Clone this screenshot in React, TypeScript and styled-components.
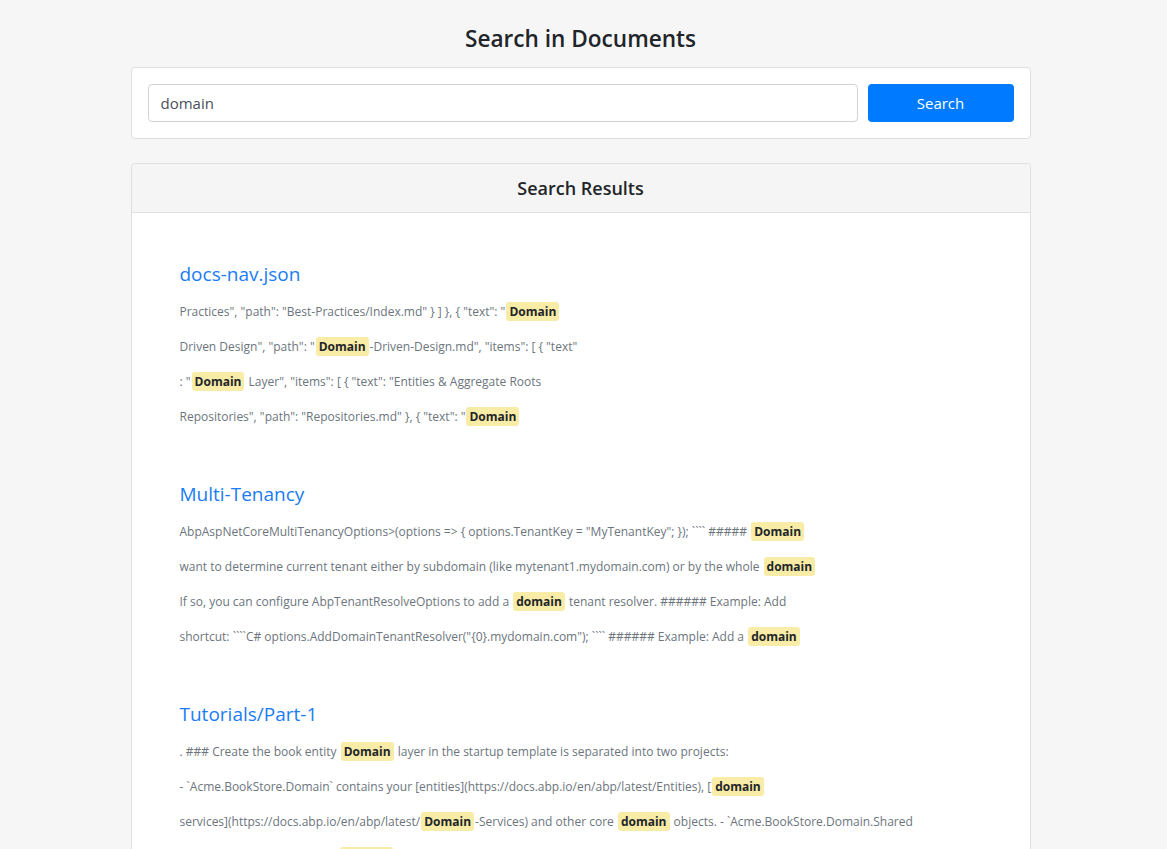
import React from "react";
import styled, { createGlobalStyle } from "styled-components";

const GlobalStyle = createGlobalStyle`
    html, body {
        margin: 0;
        padding: 0;
        background: #f6f6f6;
        font-family: "Open Sans", "Noto Sans", Arial, sans-serif;
        color: #212529;
    }
    * {
        box-sizing: border-box;
    }
`

const Page = styled.div`
    width: 900px;
    margin: 0 auto;
    padding-top: 24px;
    position: relative;
    left: -3px;
`

const Heading = styled.h3`
    margin: 0 0 13px;
    text-align: center;
    font-size: 22.6px;
    font-weight: 600;
    line-height: 30px;
    color: #212529;
`

const Card = styled.div`
    background: #fff;
    border: 1px solid #dfdfdf;
    border-radius: 4px;
`

const SearchCard = styled(Card)`
    display: flex;
    gap: 10px;
    padding: 16px;
    margin-bottom: 24px;
`

const Input = styled.input`
    flex: 1;
    height: 38px;
    padding: 6px 12px;
    font-family: inherit;
    font-size: 15px;
    color: #495057;
    border: 1px solid #ced4da;
    border-radius: 4px;
    outline: none;
`

const Button = styled.button`
    width: 146px;
    height: 38px;
    border: none;
    border-radius: 4px;
    background: #007bff;
    color: #fff;
    font-family: inherit;
    font-size: 15px;
`

const CardHeader = styled.div`
    background: #f5f5f5;
    border-bottom: 1px solid #dfdfdf;
    border-radius: 4px 4px 0 0;
    height: 49px;
    display: flex;
    align-items: center;
    justify-content: center;
    font-size: 18px;
    font-weight: 600;
`

const CardBody = styled.div`
    padding: 49px 48px 40px;
    display: flex;
    flex-direction: column;
    gap: 55px;
`

const Result = styled.div`
    display: flex;
    flex-direction: column;
    gap: 15px;
`

const ResultTitle = styled.a`
    font-size: 19px;
    line-height: 24px;
    font-weight: 500;
    color: #1a7cf5;
    text-decoration: none;
    margin-bottom: 1px;
`

const Snippet = styled.p`
    margin: 0;
    font-size: 12px;
    line-height: 20px;
    color: #6c757d;
    white-space: nowrap;
`

const Mark = styled.mark`
    background: #f9eca6;
    color: #212529;
    font-weight: 700;
    padding: 1px 3px;
    margin: 0 1px;
    border-radius: 3px;
`

type Hit = {
    title: string,
    lines: string[][],
}

// each line is text / highlight / text ...
const results: Hit[] = [
    {
        title: "docs-nav.json",
        lines: [
            ['Practices", "path": "Best-Practices/Index.md" } ] }, { "text": "', "Domain", ""],
            ['Driven Design", "path": "', "Domain", '-Driven-Design.md", "items": [ { "text"'],
            [': "', "Domain", ' Layer", "items": [ { "text": "Entities & Aggregate Roots'],
            ['Repositories", "path": "Repositories.md" }, { "text": "', "Domain", ""],
        ],
    },
    {
        title: "Multi-Tenancy",
        lines: [
            ['AbpAspNetCoreMultiTenancyOptions>(options => { options.TenantKey = "MyTenantKey"; }); ```` ##### ', "Domain", ""],
            ["want to determine current tenant either by subdomain (like mytenant1.mydomain.com) or by the whole ", "domain", ""],
            ["If so, you can configure AbpTenantResolveOptions to add a ", "domain", " tenant resolver. ###### Example: Add"],
            ['shortcut: ````C# options.AddDomainTenantResolver("{0}.mydomain.com"); ```` ###### Example: Add a ', "domain", ""],
        ],
    },
    {
        title: "Tutorials/Part-1",
        lines: [
            [". ### Create the book entity ", "Domain", " layer in the startup template is separated into two projects:"],
            ["- `Acme.BookStore.Domain` contains your [entities](https://docs.abp.io/en/abp/latest/Entities), [", "domain", ""],
            ["services](https://docs.abp.io/en/abp/latest/", "Domain", "-Services) and other core ", "domain", " objects. - `Acme.BookStore.Domain.Shared"],
            ["` project contains constants, ", "Domain", " related enums and other types."],
        ],
    },
]

export default function App() {
    return (
        <>
            <GlobalStyle />
            <Page>
                <Heading>Search in Documents</Heading>
                <SearchCard>
                    <Input defaultValue="domain" />
                    <Button>Search</Button>
                </SearchCard>
                <Card>
                    <CardHeader>Search Results</CardHeader>
                    <CardBody>
                        {results.map((r) => (
                            <Result key={r.title}>
                                <ResultTitle href="#">{r.title}</ResultTitle>
                                {r.lines.map((parts, i) => (
                                    <Snippet key={i}>
                                        {parts.map((p, j) =>
                                            j % 2 === 1 ? <Mark key={j}>{p}</Mark> : <span key={j}>{p}</span>
                                        )}
                                    </Snippet>
                                ))}
                            </Result>
                        ))}
                    </CardBody>
                </Card>
            </Page>
        </>
    )
}
